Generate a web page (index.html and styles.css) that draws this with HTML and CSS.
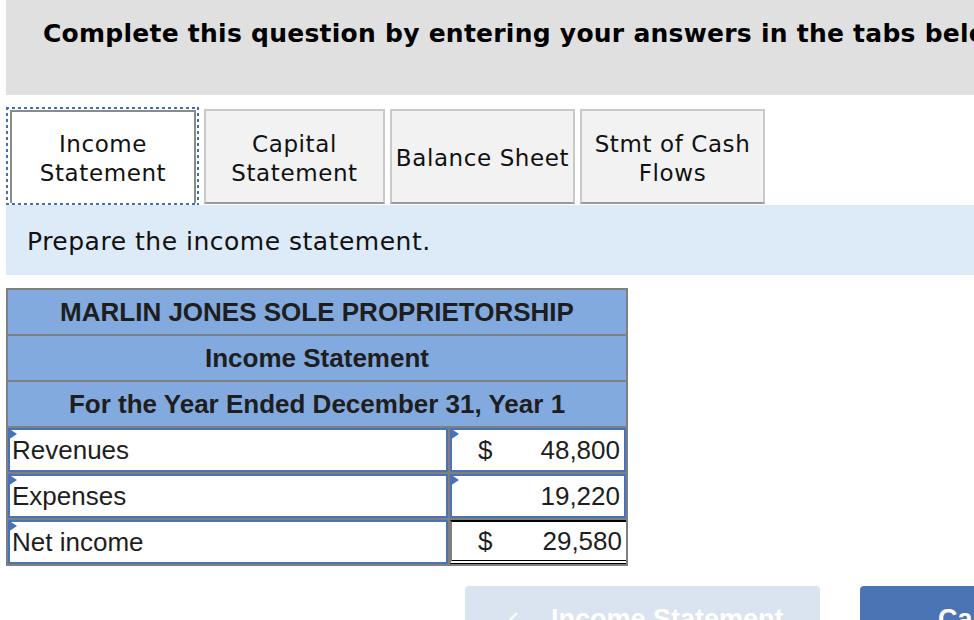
FILE: index.html
```html
<!DOCTYPE html>
<html>
<head>
<meta charset="utf-8">
<link rel="stylesheet" href="styles.css">
</head>
<body>
<div class="page">
  <div class="header">Complete this question by entering your answers in the tabs below.</div>
  <div class="tabs">
    <div class="tab-focus"><div class="tab active">Income<br>Statement</div></div>
    <div class="tab w181">Capital<br>Statement</div>
    <div class="tab">Balance Sheet</div>
    <div class="tab">Stmt of Cash<br>Flows</div>
  </div>
  <div class="instruction">Prepare the income statement.</div>
  <div class="statement">
    <div class="head-row">MARLIN JONES SOLE PROPRIETORSHIP</div>
    <div class="head-row">Income Statement</div>
    <div class="head-row">For the Year Ended December 31, Year 1</div>
    <div class="data-row">
      <div class="cell label input"><span class="tri"></span>Revenues</div>
      <div class="cell value input"><span class="tri"></span><span class="cur">$</span><span class="num">48,800</span></div>
    </div>
    <div class="data-row">
      <div class="cell label input"><span class="tri"></span>Expenses</div>
      <div class="cell value input"><span class="tri"></span><span class="cur"></span><span class="num">19,220</span></div>
    </div>
    <div class="data-row">
      <div class="cell label input"><span class="tri"></span>Net income</div>
      <div class="cell value total"><span class="cur">$</span><span class="num">29,580</span></div>
    </div>
  </div>
  <div class="nav">
    <div class="btn prev"><svg class="chev" width="12" height="20" viewBox="0 0 12 20"><polyline points="10,2 2,10 10,18" fill="none" stroke="#ffffff" stroke-width="2"/></svg><span>Income Statement</span></div>
    <div class="btn next"><span>Capital Statement</span><svg class="chev" width="12" height="20" viewBox="0 0 12 20"><polyline points="2,2 10,10 2,18" fill="none" stroke="#ffffff" stroke-width="2"/></svg></div>
  </div>
</div>
</body>
</html>
```

FILE: styles.css
```css
html, body {
  margin: 0;
  padding: 0;
  background: #ffffff;
  overflow: hidden;
}
body {
  font-family: "DejaVu Sans", Verdana, sans-serif;
  color: #111;
  width: 974px;
  height: 620px;
}
.page {
  padding-left: 6px;
  width: 1400px;
}
.header {
  height: 95px;
  box-sizing: border-box;
  background: #e0e0e0;
  padding: 19px 0 0 37px;
  font-size: 25px;
  letter-spacing: 0.25px;
  font-weight: bold;
  white-space: nowrap;
  color: #000;
}
.tabs {
  display: flex;
  align-items: flex-start;
  margin-top: 12px;
  height: 98px;
}
.tab-focus {
  height: 98px;
  box-sizing: border-box;
  padding: 3px 3px 2px 4px;
  margin-right: 5px;
  display: flex;
  background:
    repeating-linear-gradient(to right, #3f6fc2 0 3px, transparent 3px 6px) left top / 100% 2px no-repeat,
    repeating-linear-gradient(to right, #3f6fc2 0 3px, transparent 3px 6px) left bottom / 100% 2px no-repeat,
    repeating-linear-gradient(to bottom, #3f6fc2 0 3px, transparent 3px 6px) left top / 2px 100% no-repeat,
    repeating-linear-gradient(to bottom, #3f6fc2 0 3px, transparent 3px 6px) right top / 2px 100% no-repeat;
}
.tab {
  width: 185px;
  height: 95px;
  box-sizing: border-box;
  background: #f2f2f2;
  border: 2px solid #c9c9c9;
  border-bottom: 2px solid #9a9a9a;
  margin-right: 5px;
  margin-top: 2px;
  display: flex;
  align-items: center;
  justify-content: center;
  text-align: center;
  font-size: 23px;
  letter-spacing: 0.6px;
  line-height: 29px;
  padding-top: 4px;
}
.tab.w181 {
  width: 181px;
}
.tab.active {
  width: 186px;
  height: auto;
  margin: 0;
  background: #ffffff;
  border: 2px solid #8a8a8a;
  border-bottom: none;
  padding-top: 2px;
}
.instruction {
  height: 70px;
  box-sizing: border-box;
  background: #ddeaf7;
  padding: 22px 0 0 21px;
  font-size: 25px;
  letter-spacing: 0.5px;
  width: 968px;
}
.statement {
  margin-top: 13px;
  width: 622px;
  box-sizing: border-box;
  border: 2px solid #7f7f7f;
  background: #7f7f7f;
  font-family: "Liberation Sans", Arial, sans-serif;
  display: flex;
  flex-direction: column;
  gap: 2px;
}
.head-row {
  height: 44px;
  background: #82aadf;
  display: flex;
  align-items: center;
  justify-content: center;
  font-weight: bold;
  font-size: 26px;
  color: #1e1e1e;
}
.data-row {
  display: flex;
  gap: 2px;
  height: 44px;
}
.cell {
  position: relative;
  box-sizing: border-box;
  background: #ffffff;
  font-size: 26px;
  color: #1e1e1e;
  display: flex;
  align-items: center;
}
.input {
  border: 2px solid #4a72b6;
}
.label {
  width: 440px;
  padding-left: 2px;
}
.value {
  flex: 1;
  padding: 0 4px 0 26px;
}
.total {
  border-left: 2px solid #7f7f7f;
  border-top: 2px solid #000;
  border-bottom: 4px double #000;
}
.cur {
  width: 20px;
}
.num {
  flex: 1;
  text-align: right;
}
.tri {
  position: absolute;
  left: -2px;
  top: -2px;
  width: 0;
  height: 0;
  border-top: 6px solid transparent;
  border-bottom: 6px solid transparent;
  border-left: 9px solid #4a72b6;
}
.nav {
  display: flex;
  margin-top: 20px;
  margin-left: 459px;
  gap: 40px;
}
.btn {
  width: 355px;
  height: 60px;
  border-radius: 4px 4px 0 0;
  display: flex;
  justify-content: flex-start;
  align-items: flex-start;
  padding-top: 17px;
  box-sizing: border-box;
  font-family: "Liberation Sans", Arial, sans-serif;
  font-weight: bold;
  font-size: 27px;
  line-height: 32px;
  color: #ffffff;
  white-space: nowrap;
}
.prev {
  background: #dae3f0;
  padding-left: 42px;
}
.prev .chev {
  margin: 8px 32px 0 0;
}
.next {
  background: #4a74b3;
  padding-left: 78px;
}
.next .chev {
  margin: 8px 0 0 20px;
}
```
